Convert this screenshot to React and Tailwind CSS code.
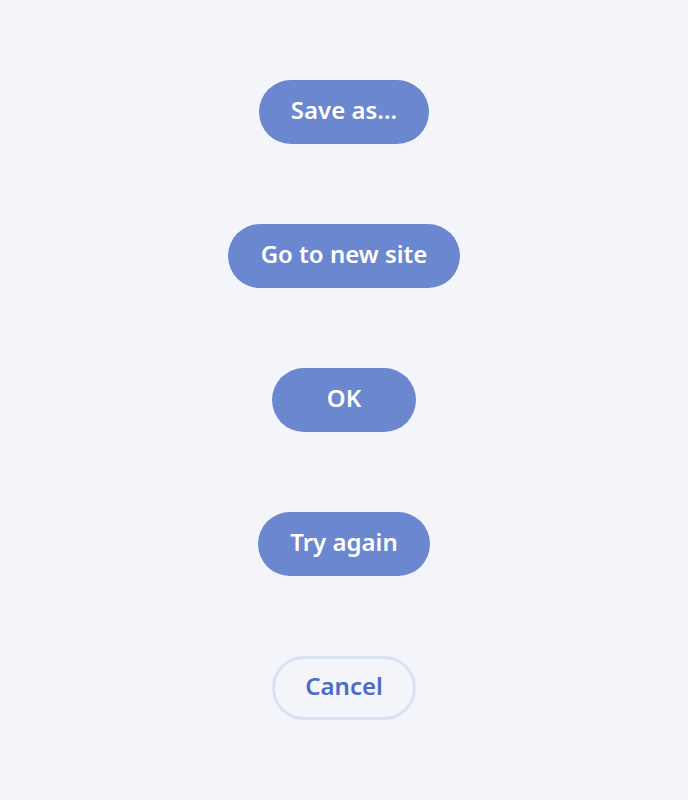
export default function App() {
  const btn =
    "h-16 rounded-full bg-[#6a87cf] text-white flex items-center justify-center text-[24px] font-semibold pb-[4px]";
  return (
    <div
      className="min-h-[800px] w-full bg-[#f4f5fb] flex flex-col items-center pt-20 gap-20"
      style={{ fontFamily: '"Noto Sans", "Open Sans", sans-serif' }}
    >
      <button className={`${btn} w-[170px]`}>Save as...</button>
      <button className={`${btn} w-[232px]`}>Go to new site</button>
      <button className={`${btn} w-[144px]`}>OK</button>
      <button className={`${btn} w-[172px]`}>Try again</button>
      <button className="h-16 w-[144px] rounded-full border-[3px] border-[#d9e1f3] text-[#4b6cc6] flex items-center justify-center text-[24px] font-semibold pb-[4px]">
        Cancel
      </button>
    </div>
  );
}
